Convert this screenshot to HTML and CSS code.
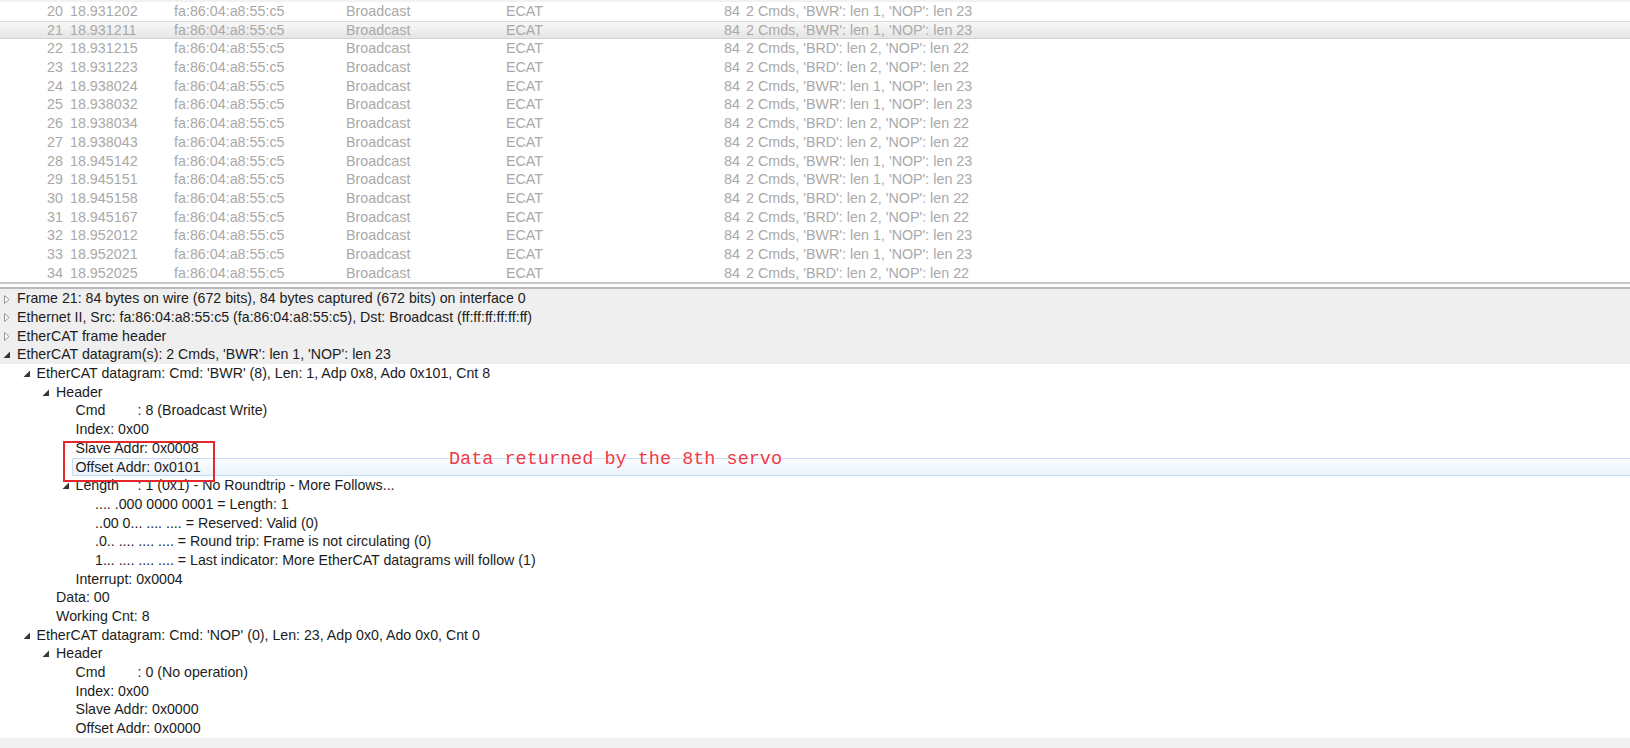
FILE: index.html
```html
<!DOCTYPE html>
<html>
<head>
<meta charset="utf-8">
<link rel="stylesheet" href="styles.css">
</head>
<body>
<div class="page">
  <div class="top-strip"></div>
  <div class="packet-list">
    <div class="pkt"><span class="c-no">20</span><span class="c-time">18.931202</span><span class="c-src">fa:86:04:a8:55:c5</span><span class="c-dst">Broadcast</span><span class="c-proto">ECAT</span><span class="c-len">84</span><span class="c-info">2 Cmds, 'BWR': len 1, 'NOP': len 23</span></div>
    <div class="pkt selected"><span class="c-no">21</span><span class="c-time">18.931211</span><span class="c-src">fa:86:04:a8:55:c5</span><span class="c-dst">Broadcast</span><span class="c-proto">ECAT</span><span class="c-len">84</span><span class="c-info">2 Cmds, 'BWR': len 1, 'NOP': len 23</span></div>
    <div class="pkt"><span class="c-no">22</span><span class="c-time">18.931215</span><span class="c-src">fa:86:04:a8:55:c5</span><span class="c-dst">Broadcast</span><span class="c-proto">ECAT</span><span class="c-len">84</span><span class="c-info">2 Cmds, 'BRD': len 2, 'NOP': len 22</span></div>
    <div class="pkt"><span class="c-no">23</span><span class="c-time">18.931223</span><span class="c-src">fa:86:04:a8:55:c5</span><span class="c-dst">Broadcast</span><span class="c-proto">ECAT</span><span class="c-len">84</span><span class="c-info">2 Cmds, 'BRD': len 2, 'NOP': len 22</span></div>
    <div class="pkt"><span class="c-no">24</span><span class="c-time">18.938024</span><span class="c-src">fa:86:04:a8:55:c5</span><span class="c-dst">Broadcast</span><span class="c-proto">ECAT</span><span class="c-len">84</span><span class="c-info">2 Cmds, 'BWR': len 1, 'NOP': len 23</span></div>
    <div class="pkt"><span class="c-no">25</span><span class="c-time">18.938032</span><span class="c-src">fa:86:04:a8:55:c5</span><span class="c-dst">Broadcast</span><span class="c-proto">ECAT</span><span class="c-len">84</span><span class="c-info">2 Cmds, 'BWR': len 1, 'NOP': len 23</span></div>
    <div class="pkt"><span class="c-no">26</span><span class="c-time">18.938034</span><span class="c-src">fa:86:04:a8:55:c5</span><span class="c-dst">Broadcast</span><span class="c-proto">ECAT</span><span class="c-len">84</span><span class="c-info">2 Cmds, 'BRD': len 2, 'NOP': len 22</span></div>
    <div class="pkt"><span class="c-no">27</span><span class="c-time">18.938043</span><span class="c-src">fa:86:04:a8:55:c5</span><span class="c-dst">Broadcast</span><span class="c-proto">ECAT</span><span class="c-len">84</span><span class="c-info">2 Cmds, 'BRD': len 2, 'NOP': len 22</span></div>
    <div class="pkt"><span class="c-no">28</span><span class="c-time">18.945142</span><span class="c-src">fa:86:04:a8:55:c5</span><span class="c-dst">Broadcast</span><span class="c-proto">ECAT</span><span class="c-len">84</span><span class="c-info">2 Cmds, 'BWR': len 1, 'NOP': len 23</span></div>
    <div class="pkt"><span class="c-no">29</span><span class="c-time">18.945151</span><span class="c-src">fa:86:04:a8:55:c5</span><span class="c-dst">Broadcast</span><span class="c-proto">ECAT</span><span class="c-len">84</span><span class="c-info">2 Cmds, 'BWR': len 1, 'NOP': len 23</span></div>
    <div class="pkt"><span class="c-no">30</span><span class="c-time">18.945158</span><span class="c-src">fa:86:04:a8:55:c5</span><span class="c-dst">Broadcast</span><span class="c-proto">ECAT</span><span class="c-len">84</span><span class="c-info">2 Cmds, 'BRD': len 2, 'NOP': len 22</span></div>
    <div class="pkt"><span class="c-no">31</span><span class="c-time">18.945167</span><span class="c-src">fa:86:04:a8:55:c5</span><span class="c-dst">Broadcast</span><span class="c-proto">ECAT</span><span class="c-len">84</span><span class="c-info">2 Cmds, 'BRD': len 2, 'NOP': len 22</span></div>
    <div class="pkt"><span class="c-no">32</span><span class="c-time">18.952012</span><span class="c-src">fa:86:04:a8:55:c5</span><span class="c-dst">Broadcast</span><span class="c-proto">ECAT</span><span class="c-len">84</span><span class="c-info">2 Cmds, 'BWR': len 1, 'NOP': len 23</span></div>
    <div class="pkt"><span class="c-no">33</span><span class="c-time">18.952021</span><span class="c-src">fa:86:04:a8:55:c5</span><span class="c-dst">Broadcast</span><span class="c-proto">ECAT</span><span class="c-len">84</span><span class="c-info">2 Cmds, 'BWR': len 1, 'NOP': len 23</span></div>
    <div class="pkt"><span class="c-no">34</span><span class="c-time">18.952025</span><span class="c-src">fa:86:04:a8:55:c5</span><span class="c-dst">Broadcast</span><span class="c-proto">ECAT</span><span class="c-len">84</span><span class="c-info">2 Cmds, 'BRD': len 2, 'NOP': len 22</span></div>
  </div>
  <div class="splitter"></div>
  <div class="details">
    <div class="node l0 band"><span class="tog"><svg class="tri-c" width="6" height="9" viewBox="0 0 6 9"><polygon points="0.5,0.5 5,4.5 0.5,8.5" fill="#fff" stroke="#959595" stroke-width="1"/></svg></span><span class="lbl">Frame 21: 84 bytes on wire (672 bits), 84 bytes captured (672 bits) on interface 0</span></div>
    <div class="node l0 band"><span class="tog"><svg class="tri-c" width="6" height="9" viewBox="0 0 6 9"><polygon points="0.5,0.5 5,4.5 0.5,8.5" fill="#fff" stroke="#959595" stroke-width="1"/></svg></span><span class="lbl">Ethernet II, Src: fa:86:04:a8:55:c5 (fa:86:04:a8:55:c5), Dst: Broadcast (ff:ff:ff:ff:ff:ff)</span></div>
    <div class="node l0 band"><span class="tog"><svg class="tri-c" width="6" height="9" viewBox="0 0 6 9"><polygon points="0.5,0.5 5,4.5 0.5,8.5" fill="#fff" stroke="#959595" stroke-width="1"/></svg></span><span class="lbl">EtherCAT frame header</span></div>
    <div class="node l0 band"><span class="tog"><svg class="tri-e" width="8" height="8" viewBox="0 0 8 8"><polygon points="7,0.5 7,7 0.5,7" fill="#363636"/></svg></span><span class="lbl">EtherCAT datagram(s): 2 Cmds, 'BWR': len 1, 'NOP': len 23</span></div>
    <div class="node l1"><span class="tog"><svg class="tri-e" width="8" height="8" viewBox="0 0 8 8"><polygon points="7,0.5 7,7 0.5,7" fill="#363636"/></svg></span><span class="lbl">EtherCAT datagram: Cmd: 'BWR' (8), Len: 1, Adp 0x8, Ado 0x101, Cnt 8</span></div>
    <div class="node l2"><span class="tog"><svg class="tri-e" width="8" height="8" viewBox="0 0 8 8"><polygon points="7,0.5 7,7 0.5,7" fill="#363636"/></svg></span><span class="lbl">Header</span></div>
    <div class="node l3"><span class="tog"></span><span class="lbl"><span class="key">Cmd</span>: 8 (Broadcast Write)</span></div>
    <div class="node l3"><span class="tog"></span><span class="lbl">Index: 0x00</span></div>
    <div class="node l3"><span class="tog"></span><span class="lbl">Slave Addr: 0x0008</span></div>
    <div class="node l3"><span class="tog"></span><span class="lbl hover">Offset Addr: 0x0101</span></div>
    <div class="node l3"><span class="tog"><svg class="tri-e" width="8" height="8" viewBox="0 0 8 8"><polygon points="7,0.5 7,7 0.5,7" fill="#363636"/></svg></span><span class="lbl"><span class="key">Length</span>: 1 (0x1) - No Roundtrip - More Follows...</span></div>
    <div class="node l4"><span class="tog"></span><span class="lbl">.... .000 0000 0001 = Length: 1</span></div>
    <div class="node l4"><span class="tog"></span><span class="lbl">..00 0... .... .... = Reserved: Valid (0)</span></div>
    <div class="node l4"><span class="tog"></span><span class="lbl">.0.. .... .... .... = Round trip: Frame is not circulating (0)</span></div>
    <div class="node l4"><span class="tog"></span><span class="lbl">1... .... .... .... = Last indicator: More EtherCAT datagrams will follow (1)</span></div>
    <div class="node l3"><span class="tog"></span><span class="lbl">Interrupt: 0x0004</span></div>
    <div class="node l2"><span class="tog"></span><span class="lbl">Data: 00</span></div>
    <div class="node l2"><span class="tog"></span><span class="lbl">Working Cnt: 8</span></div>
    <div class="node l1"><span class="tog"><svg class="tri-e" width="8" height="8" viewBox="0 0 8 8"><polygon points="7,0.5 7,7 0.5,7" fill="#363636"/></svg></span><span class="lbl">EtherCAT datagram: Cmd: 'NOP' (0), Len: 23, Adp 0x0, Ado 0x0, Cnt 0</span></div>
    <div class="node l2"><span class="tog"><svg class="tri-e" width="8" height="8" viewBox="0 0 8 8"><polygon points="7,0.5 7,7 0.5,7" fill="#363636"/></svg></span><span class="lbl">Header</span></div>
    <div class="node l3"><span class="tog"></span><span class="lbl"><span class="key">Cmd</span>: 0 (No operation)</span></div>
    <div class="node l3"><span class="tog"></span><span class="lbl">Index: 0x00</span></div>
    <div class="node l3"><span class="tog"></span><span class="lbl">Slave Addr: 0x0000</span></div>
    <div class="node l3"><span class="tog"></span><span class="lbl">Offset Addr: 0x0000</span></div>
  </div>
  <div class="footer"></div>
  <div class="red-box"></div>
  <div class="annotation">Data returned by the 8th servo</div>
</div>
</body>
</html>
```

FILE: styles.css
```css
html, body {
  margin: 0;
  padding: 0;
  background: #ffffff;
}
body {
  font-family: "Liberation Sans", Arial, sans-serif;
  font-size: 14px;
}
.page {
  position: relative;
  display: flex;
  flex-direction: column;
  height: 748px;
  overflow: hidden;
}
.top-strip {
  height: 2px;
  background: #f2f2f2;
  flex: none;
}
.packet-list {
  flex: none;
  color: #a9a9a9;
  font-size: 14.3px;
}
.pkt {
  display: grid;
  grid-template-columns: 63px 111px 172px 160px 160px 74px 1fr;
  height: 18.7px;
  line-height: 18.7px;
  white-space: nowrap;
  box-sizing: border-box;
}
.pkt.selected {
  background: linear-gradient(#f8f8f8, #e5e5e5);
  border-top: 1px solid #dadada;
  border-bottom: 1px solid #d2d2d2;
  line-height: 16.7px;
}
.c-no { text-align: right; }
.c-time { padding-left: 7px; }
.c-len { text-align: right; }
.c-info { padding-left: 6px; }
.splitter {
  flex: none;
  height: 7px;
  box-sizing: border-box;
  border-top: 2px solid #c6c6c6;
  border-bottom: 2px solid #b9b9bc;
  background: #fbfbfb;
}
.details {
  flex: none;
  color: #1c1c1c;
  font-size: 14.2px;
}
.node {
  display: flex;
  align-items: stretch;
  height: 18.7px;
  line-height: 18.7px;
  white-space: pre;
}
.node.band { background: #efefef; }
.l0 { padding-left: 4px; }
.l1 { padding-left: 23.5px; }
.l2 { padding-left: 43px; }
.l3 { padding-left: 62.5px; }
.l4 { padding-left: 82px; }
.tog {
  flex: none;
  width: 13px;
  display: flex;
  align-items: center;
}
.tri-c { margin-top: 1px; }
.tri-e { margin-top: 1px; margin-left: -1px; }
.lbl { display: block; }
.key {
  display: inline-block;
  width: 62px;
}
.lbl.hover {
  flex: 1;
  margin-left: -4px;
  padding-left: 3px;
  border: 1px solid #c4dcf6;
  border-right: none;
  border-radius: 2px 0 0 2px;
  background: linear-gradient(#fbfdff, #eaf2fc);
  line-height: 16.7px;
}
.footer {
  flex: 1;
  background: #f1f1f1;
}
.red-box {
  position: absolute;
  left: 63px;
  top: 441px;
  width: 152px;
  height: 41px;
  box-sizing: border-box;
  border: 2px solid #e4262d;
}
.annotation {
  position: absolute;
  left: 449px;
  top: 450px;
  font-family: "Liberation Mono", "Courier New", monospace;
  font-size: 18.5px;
  line-height: 20px;
  color: #ef3a47;
  white-space: nowrap;
  text-shadow: 0 0 2px #ffffff, 0 0 2px #ffffff, 0 0 1px #ffffff;
}
```
